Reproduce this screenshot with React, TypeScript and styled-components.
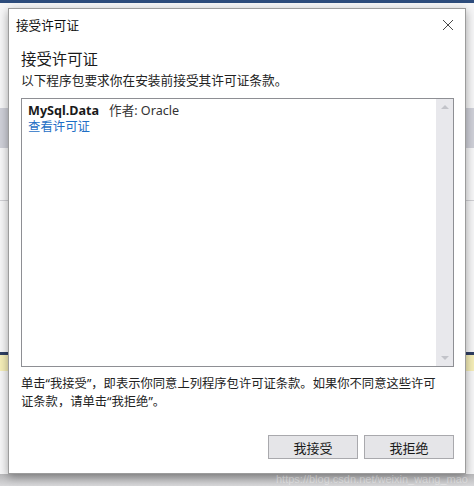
import React from 'react';
import styled, { createGlobalStyle } from 'styled-components';

const GlobalStyle = createGlobalStyle`
  html, body {
    margin: 0;
    padding: 0;
    width: 474px;
    height: 486px;
    overflow: hidden;
  }
  body {
    font-family: "Noto Sans", "Noto Sans CJK SC", sans-serif;
    color: #1e1e1e;
  }
`;

const Screen = styled.div`
  position: relative;
  width: 474px;
  height: 486px;
  display: flex;
  flex-direction: column;
  background: #f4f4f6;
`;

const Band = styled.div<{ h: number; bg: string }>`
  height: ${({ h }) => h}px;
  flex: none;
  background: ${({ bg }) => bg};
`;

const Shadow = styled.div`
  flex: 1;
  background: linear-gradient(#b9b9bb, #d8d8da);
`;

const Dialog = styled.div`
  position: absolute;
  left: 8px;
  top: 8px;
  width: 456px;
  height: 464px;
  display: flex;
  flex-direction: column;
  background: #ffffff;
  border: 1px solid #9c9c9c;
  box-shadow: 0 3px 9px rgba(0, 0, 0, 0.35);
`;

const TitleBar = styled.div`
  height: 31px;
  display: flex;
  align-items: center;
  justify-content: space-between;
  padding: 0 10px 0 7px;
  font-size: 12.6px;
  color: #111;
`;

const CloseButton = styled.div`
  width: 14px;
  height: 14px;
  display: flex;
  align-items: center;
  justify-content: center;
`;

const Body = styled.div`
  flex: 1;
  display: flex;
  flex-direction: column;
  padding: 0 11px 0 12px;
`;

const Heading = styled.div`
  margin-top: 10px;
  font-size: 15.4px;
  line-height: 20px;
  color: #1a1a1a;
`;

const Subtitle = styled.div`
  margin-top: 2px;
  font-size: 12.7px;
  line-height: 16px;
  color: #222;
`;

const ListBox = styled.div`
  margin-top: 10px;
  height: 269px;
  box-sizing: border-box;
  border: 1px solid #8e8f94;
  display: flex;
`;

const ListContent = styled.div`
  flex: 1;
  padding: 4px 6px;
`;

const PackageLine = styled.div`
  font-size: 12.6px;
  line-height: 16px;
  display: flex;
  gap: 10px;
`;

const PackageName = styled.span`
  font-weight: 700;
  color: #1a1a1a;
`;

const Author = styled.span`
  color: #333;
`;

const LicenseLink = styled.a`
  display: block;
  font-size: 12.4px;
  line-height: 16px;
  color: #1f6fc5;
  text-decoration: none;
  cursor: pointer;
`;

const ScrollBar = styled.div`
  width: 17px;
  background: #e8e8ec;
  display: flex;
  flex-direction: column;
  justify-content: space-between;
  align-items: center;
  padding: 6px 0;
`;

const Arrow = styled.div<{ down?: boolean }>`
  width: 0;
  height: 0;
  border-left: 4px solid transparent;
  border-right: 4px solid transparent;
  ${({ down }) =>
    down ? 'border-top: 4px solid #c2c3c9;' : 'border-bottom: 4px solid #c2c3c9;'}
`;

const Notice = styled.div`
  margin-top: 8px;
  font-size: 12.3px;
  line-height: 18px;
  color: #222;
  white-space: nowrap;
`;

const ButtonRow = styled.div`
  margin-top: 24px;
  display: flex;
  justify-content: flex-end;
  gap: 6px;
`;

const Button = styled.button`
  width: 90px;
  height: 24px;
  box-sizing: border-box;
  background: #e5e5e8;
  border: 1px solid #a9a9ad;
  font-family: "Noto Sans", "Noto Sans CJK SC", sans-serif;
  font-size: 13px;
  color: #1a1a1a;
  padding: 0;
`;

const Watermark = styled.div`
  position: absolute;
  right: 6px;
  bottom: 0px;
  font-family: "Liberation Sans", sans-serif;
  font-size: 11px;
  line-height: 13px;
  color: rgba(255, 255, 255, 0.35);
`;

const CloseIcon = () => (
  <svg width="12" height="12" viewBox="0 0 12 12">
    <path d="M1 1L11 11M11 1L1 11" stroke="#333" strokeWidth="0.9" fill="none" />
  </svg>
);

const App: React.FC = () => {
  return (
    <>
      <GlobalStyle />
      <Screen>
        <Band h={3} bg="#2d4c7c" />
        <Band h={105} bg="#f6f6f7" />
        <Band h={40} bg="#cfd0d8" />
        <Band h={52} bg="#f7f7f8" />
        <Band h={1} bg="#d0d0d4" />
        <Band h={151} bg="#f6f6f7" />
        <Band h={3} bg="#2f3f63" />
        <Band h={16} bg="#f5eeb8" />
        <Band h={103} bg="#f6f6f7" />
        <Shadow />
        <Dialog>
          <TitleBar>
            <span>接受许可证</span>
            <CloseButton>
              <CloseIcon />
            </CloseButton>
          </TitleBar>
          <Body>
            <Heading>接受许可证</Heading>
            <Subtitle>以下程序包要求你在安装前接受其许可证条款。</Subtitle>
            <ListBox>
              <ListContent>
                <PackageLine>
                  <PackageName>MySql.Data</PackageName>
                  <Author>作者: Oracle</Author>
                </PackageLine>
                <LicenseLink>查看许可证</LicenseLink>
              </ListContent>
              <ScrollBar>
                <Arrow />
                <Arrow down />
              </ScrollBar>
            </ListBox>
            <Notice>
              单击“我接受”，即表示你同意上列程序包许可证条款。如果你不同意这些许可
              <br />
              证条款，请单击“我拒绝”。
            </Notice>
            <ButtonRow>
              <Button>我接受</Button>
              <Button>我拒绝</Button>
            </ButtonRow>
          </Body>
        </Dialog>
        <Watermark>https://blog.csdn.net/weixin_wang_mao</Watermark>
      </Screen>
    </>
  );
};

export default App;
